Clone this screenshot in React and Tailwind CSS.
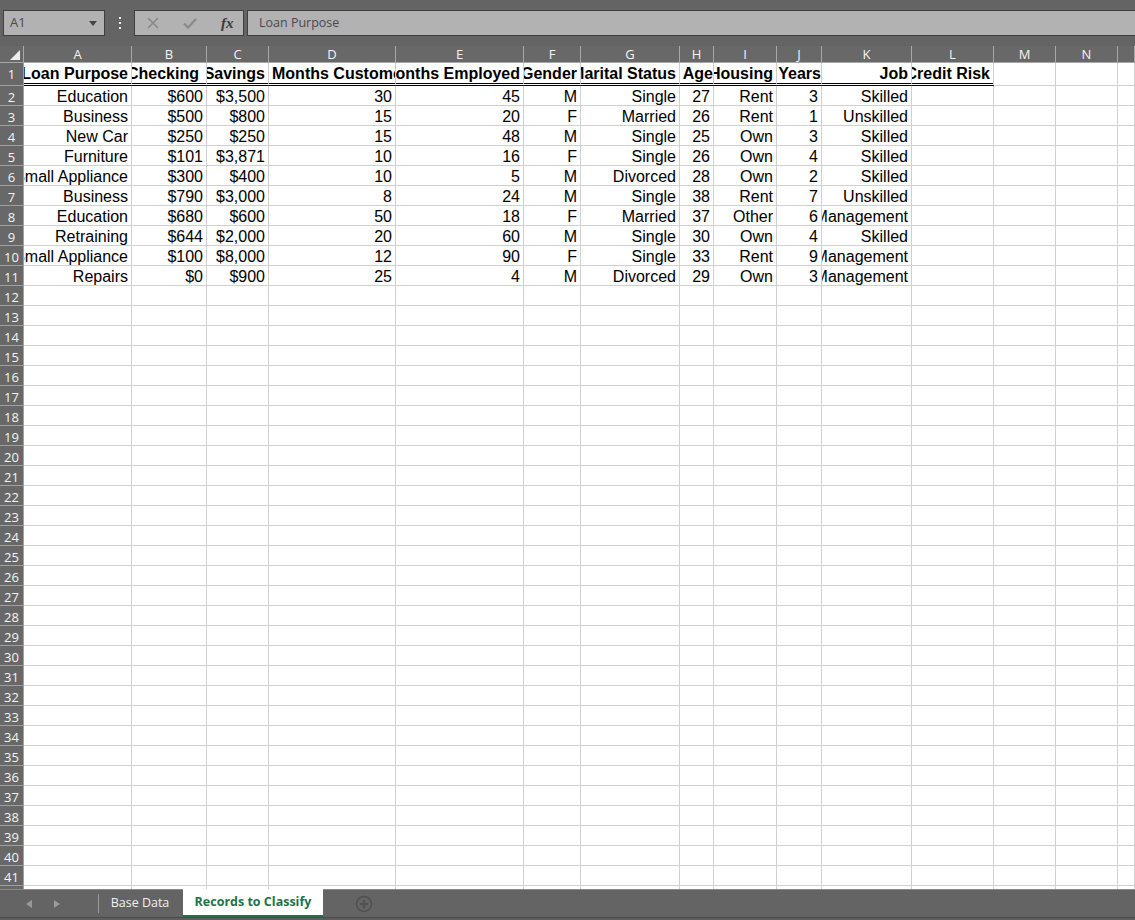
import React from 'react';

const sans = { fontFamily: '"Liberation Sans", Arial, sans-serif' };
const ui = { fontFamily: '"Open Sans", sans-serif' };

const columns = ['A', 'B', 'C', 'D', 'E', 'F', 'G', 'H', 'I', 'J', 'K', 'L', 'M', 'N', ''];

// pad is the gap to the right edge of the cell, it differs per header in the sheet
const headers = [
  { label: 'Loan Purpose', align: 'justify-end pr-[3px]' },
  { label: 'Checking', align: 'justify-end pr-[7px]' },
  { label: 'Savings', align: 'justify-end pr-[3px]' },
  { label: 'Months Customer', align: 'justify-start pl-[3px]' },
  { label: 'Months Employed', align: 'justify-end pr-[3px]' },
  { label: 'Gender', align: 'justify-end pr-[3px]' },
  { label: 'Marital Status', align: 'justify-end pr-[3px]' },
  { label: 'Age', align: 'justify-end pr-0' },
  { label: 'Housing', align: 'justify-end pr-[3px]' },
  { label: 'Years', align: 'justify-end pr-0' },
  { label: 'Job', align: 'justify-end pr-[3px]' },
  { label: 'Credit Risk', align: 'justify-end pr-[3px]' },
];

const records = [
  ['Education', '$600', '$3,500', '30', '45', 'M', 'Single', '27', 'Rent', '3', 'Skilled'],
  ['Business', '$500', '$800', '15', '20', 'F', 'Married', '26', 'Rent', '1', 'Unskilled'],
  ['New Car', '$250', '$250', '15', '48', 'M', 'Single', '25', 'Own', '3', 'Skilled'],
  ['Furniture', '$101', '$3,871', '10', '16', 'F', 'Single', '26', 'Own', '4', 'Skilled'],
  ['Small Appliance', '$300', '$400', '10', '5', 'M', 'Divorced', '28', 'Own', '2', 'Skilled'],
  ['Business', '$790', '$3,000', '8', '24', 'M', 'Single', '38', 'Rent', '7', 'Unskilled'],
  ['Education', '$680', '$600', '50', '18', 'F', 'Married', '37', 'Other', '6', 'Management'],
  ['Retraining', '$644', '$2,000', '20', '60', 'M', 'Single', '30', 'Own', '4', 'Skilled'],
  ['Small Appliance', '$100', '$8,000', '12', '90', 'F', 'Single', '33', 'Rent', '9', 'Management'],
  ['Repairs', '$0', '$900', '25', '4', 'M', 'Divorced', '29', 'Own', '3', 'Management'],
];

const gridCols = 'grid grid-cols-[24px_108px_75px_62px_127px_128px_57px_99px_34px_63px_45px_90px_82px_62px_62px_17px]';

function Cell({ children, className = '' }) {
  return (
    <div className={`flex items-center justify-end overflow-hidden whitespace-nowrap border-r border-b border-[#d0d0d0] bg-white pr-[3px] pt-[3px] text-[16px] leading-[16px] text-black ${className}`} style={sans}>
      <span className="shrink-0">{children}</span>
    </div>
  );
}

function RowHead({ n, tall }) {
  return (
    <div className={`flex items-center justify-center border-r border-b border-[#a0a0a0] bg-[#686868] text-[13px] leading-[14px] text-[#f4f4f4] ${tall ? 'h-[23px]' : 'h-[20px] pt-[2px]'}`} style={ui}>
      {n}
    </div>
  );
}

function FormulaBar() {
  return (
    <div className="flex h-[46px] shrink-0 items-start pt-[10px]">
      <div className="ml-[3px] flex h-[26px] w-[102px] items-center justify-between border border-[#3f3f3f] bg-[#b2b2b2] pl-[6px] pr-[7px] text-[13px] text-[#4a4a4a]" style={ui}>
        <span>A1</span>
        <svg width="8" height="5" viewBox="0 0 8 5"><path d="M0 0h8L4 5z" fill="#444" /></svg>
      </div>
      <div className="ml-[13px] flex h-[26px] w-[3px] flex-col items-center justify-center gap-[3px]">
        <span className="h-[2px] w-[2px] bg-[#eee]" />
        <span className="h-[2px] w-[2px] bg-[#eee]" />
        <span className="h-[2px] w-[2px] bg-[#eee]" />
      </div>
      <div className="ml-[13px] flex h-[26px] w-[110px] items-center border border-[#3f3f3f] bg-[#b2b2b2]">
        <svg className="ml-[12px]" width="12" height="12" viewBox="0 0 12 12"><path d="M1 1l10 10M11 1L1 11" stroke="#8a8a8a" strokeWidth="1.6" fill="none" /></svg>
        <svg className="ml-[24px]" width="14" height="12" viewBox="0 0 14 12"><path d="M1 6.5l4 4L13 2" stroke="#8a8a8a" strokeWidth="2.2" fill="none" /></svg>
        <span className="ml-[24px] text-[15px] font-bold italic leading-none text-[#3a3a3a]" style={{ fontFamily: '"Liberation Serif", serif' }}>fx</span>
      </div>
      <div className="ml-[3px] flex h-[26px] flex-1 items-center border-y border-l border-[#3f3f3f] bg-[#b2b2b2] pl-[11px] text-[12.5px] text-[#4a4a4a]" style={ui}>
        Loan Purpose
      </div>
    </div>
  );
}

function Sheet() {
  const blanks = (from) => columns.slice(from).map((c, i) => <Cell key={`b${from}-${i}`} className="h-full" />);
  const rows = [];
  for (let n = 2; n <= 42; n++) {
    const rec = records[n - 2] || [];
    rows.push(
      <div key={n} className={gridCols}>
        <RowHead n={n > 41 ? '' : n} />
        {rec.map((v, i) => <Cell key={i} className="h-[20px]">{v}</Cell>)}
        {blanks(rec.length)}
      </div>
    );
  }

  return (
    <div className="h-[843px] shrink-0 overflow-hidden">
      <div className={`${gridCols} h-[17px] border-b border-[#a8a8a8] bg-[#686868]`}>
        <div className="flex items-end justify-end border-r border-[#a8a8a8] pb-[2px] pr-[3px]">
          <svg width="10" height="10" viewBox="0 0 10 10"><path d="M10 0v10H0z" fill="#eee" /></svg>
        </div>
        {columns.map((c, i) => (
          <div key={i} className="flex items-center justify-center border-r border-[#a8a8a8] text-[13px] leading-none text-[#f4f4f4]" style={ui}>
            {c}
          </div>
        ))}
      </div>

      <div className={gridCols}>
        <RowHead n={1} tall />
        {headers.map((h) => (
          <div key={h.label} className={`flex h-[23px] items-center overflow-hidden whitespace-nowrap border-r border-r-[#d0d0d0] border-b-[3px] border-double border-b-black bg-white pt-[2px] text-[16px] font-bold leading-[16px] text-black ${h.align}`} style={sans}>
            <span className="shrink-0">{h.label}</span>
          </div>
        ))}
        {blanks(12)}
      </div>
      {rows}
    </div>
  );
}

function SheetTabs() {
  return (
    <div className="flex h-[31px] shrink-0 flex-col">
      <div className="flex h-[28px] items-stretch border-t border-[#8a8a8a] bg-[#646464] text-[12.5px]" style={ui}>
        <div className="flex w-[98px] items-center pl-[26px]">
          <svg width="6" height="8" viewBox="0 0 6 8"><path d="M6 0v8L0 4z" fill="#9a9a9a" /></svg>
          <svg className="ml-[22px]" width="6" height="8" viewBox="0 0 6 8"><path d="M0 0v8l6-4z" fill="#9a9a9a" /></svg>
        </div>
        <div className="my-[4px] w-px bg-[#9a9a9a]" />
        <div className="flex w-[84px] items-center justify-center pr-[2px] text-[#f0f0f0]">Base Data</div>
        <div className="-mt-px flex w-[140px] items-center justify-center border-b-[2px] border-[#217346] bg-white font-bold text-[#217346]">Records to Classify</div>
        <svg className="ml-[32px] self-center" width="18" height="18" viewBox="0 0 18 18">
          <circle cx="9" cy="9" r="7.5" fill="none" stroke="#505050" strokeWidth="1.5" />
          <path d="M5 9h8M9 5v8" stroke="#505050" strokeWidth="2" />
        </svg>
      </div>
      <div className="flex-1 border-t border-[#4a4a4a] bg-[#5e5e5e]" />
    </div>
  );
}

export default function App() {
  return (
    <div className="flex h-[920px] w-[1135px] flex-col overflow-hidden bg-[#646464]">
      <FormulaBar />
      <Sheet />
      <SheetTabs />
    </div>
  );
}
